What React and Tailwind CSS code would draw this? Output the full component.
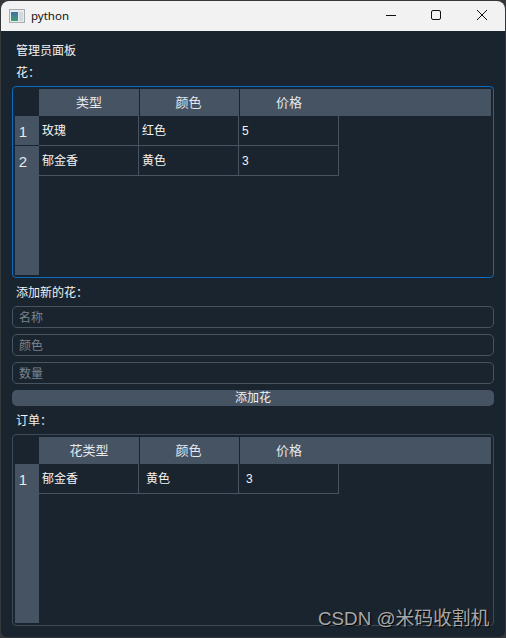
import React from "react";

const font = { fontFamily: '"Liberation Sans", "Noto Sans CJK SC", sans-serif' };

const DataTable = ({ headers, rows, boxClass, firstColPad = [] }) => (
  <div className={`flex h-[192px] w-[482px] flex-col rounded-[4px] border p-[2px] ${boxClass}`}>
    {/* header row */}
    <div className="flex h-[27px] shrink-0">
      <div className="w-[24px] shrink-0" />
      <div className="flex w-[100px] items-center justify-center bg-[#465362] text-[13px] text-[#e4e8ec]">{headers[0]}</div>
      <div className="ml-[1px] flex w-[99px] items-center justify-center bg-[#465362] pr-[2px] text-[13px] text-[#e4e8ec]">{headers[1]}</div>
      <div className="ml-[1px] flex flex-1 items-center bg-[#465362] pl-[36px] text-[13px] text-[#e4e8ec]">{headers[2]}</div>
    </div>
    <div className="flex min-h-0 flex-1">
      {/* row numbers */}
      <div className="flex w-[24px] shrink-0 flex-col gap-[1px]">
        {rows.map((row, i) => (
          <div key={i} className={`flex items-start justify-center bg-[#465362] pr-[8px] pt-[6px] text-[15px] leading-[20px] text-[#e4e8ec] ${i === rows.length - 1 ? "flex-1" : "h-[29px]"}`}>
            {i + 1}
          </div>
        ))}
      </div>
      {/* cells */}
      <div className="flex flex-col">
        {rows.map((row, i) => (
          <div key={i} className="flex h-[30px] border-b border-[#465362] text-[12px] text-[#f0f2f4]">
            {row.map((cell, j) => (
              <div key={j} className={`flex w-[100px] items-center border-r border-[#465362] ${firstColPad[j] || "pl-[3px]"}`}>
                {cell}
              </div>
            ))}
          </div>
        ))}
      </div>
    </div>
  </div>
);

const Field = ({ placeholder }) => (
  <input
    readOnly
    placeholder={placeholder}
    className="block h-[22px] w-[482px] rounded-[5px] border border-[#465362] bg-transparent px-[6px] pt-[2px] text-[12px] outline-none placeholder:text-[#7b858f]"
    style={font}
  />
);

export default function App() {
  return (
    <div className="relative h-[638px] w-[506px] overflow-hidden bg-[#34383b]" style={font}>
      <div className="ml-[1px] mt-[1px] flex h-[636px] w-[504px] flex-col overflow-hidden rounded-t-[8px] rounded-b-[6px] bg-[#1a242e]">
        {/* title bar */}
        <div className="flex h-[30px] shrink-0 items-center bg-[#f2f2f2]">
          <svg className="ml-[8px]" width="16" height="14" viewBox="0 0 16 14">
            <defs>
              <linearGradient id="thumb" x1="0" y1="0" x2="0" y2="1">
                <stop offset="0" stopColor="#3f6fa8" />
                <stop offset="1" stopColor="#3fa070" />
              </linearGradient>
            </defs>
            <rect x="0.5" y="0.5" width="15" height="13" fill="#e8ecef" stroke="#a8adb1" />
            <rect x="2" y="3" width="7" height="9" fill="url(#thumb)" />
            <rect x="10" y="3" width="4" height="9" fill="#d3dadf" />
          </svg>
          <span className="ml-[6px] text-[11.5px] text-[#111111]" style={{ fontFamily: '"Noto Sans", sans-serif' }}>python</span>
          <div className="ml-auto flex items-center">
            <svg width="46" height="30" viewBox="0 0 46 30">
              <path d="M18 14.5h10" stroke="#111" strokeWidth="1" />
            </svg>
            <svg width="46" height="30" viewBox="0 0 46 30">
              <rect x="17.5" y="9.5" width="9" height="9" rx="1.5" fill="none" stroke="#111" />
            </svg>
            <svg className="mr-[-1px]" width="46" height="30" viewBox="0 0 46 30">
              <path d="M17 9l10 10M27 9l-10 10" stroke="#111" strokeWidth="1" />
            </svg>
          </div>
        </div>

        <div className="flex flex-1 flex-col pl-[11px]">
          <div className="ml-[4px] mt-[11px] h-[18px] text-[12px] leading-[18px] text-[#f0f2f4]">管理员面板</div>
          <div className="ml-[4px] mt-[4px] h-[18px] text-[12px] leading-[18px] text-[#f0f2f4]">花：</div>
          <div className="mt-[4px]">
            <DataTable
              headers={["类型", "颜色", "价格"]}
              rows={[["玫瑰", "红色", "5"], ["郁金香", "黄色", "3"]]}
              boxClass="border-[#0a6cc0]"
            />
          </div>
          <div className="ml-[4px] mt-[6px] h-[18px] text-[12px] leading-[18px] text-[#f0f2f4]">添加新的花：</div>
          <div className="mt-[4px] flex flex-col gap-[6px]">
            <Field placeholder="名称" />
            <Field placeholder="颜色" />
            <Field placeholder="数量" />
          </div>
          <button className="mt-[6px] flex h-[16px] w-[482px] items-center justify-center rounded-[5px] bg-[#465362] text-[12px] text-[#f0f2f4]">
            添加花
          </button>
          <div className="ml-[4px] mt-[6px] h-[18px] text-[12px] leading-[18px] text-[#f0f2f4]">订单：</div>
          <div className="mt-[4px]">
            <DataTable
              headers={["花类型", "颜色", "价格"]}
              rows={[["郁金香", "黄色", "3"]]}
              boxClass="border-[#3c4a59]"
              firstColPad={["pl-[3px]", "pl-[7px]", "pl-[7px]"]}
            />
          </div>
        </div>
      </div>
      {/* CSDN watermark */}
      <div className="absolute left-[318px] top-[607px] text-[18.8px] leading-[24px] text-[#a8a8a8] [text-shadow:1px_1px_1px_#000]">
        CSDN @米码收割机
      </div>
    </div>
  );
}
